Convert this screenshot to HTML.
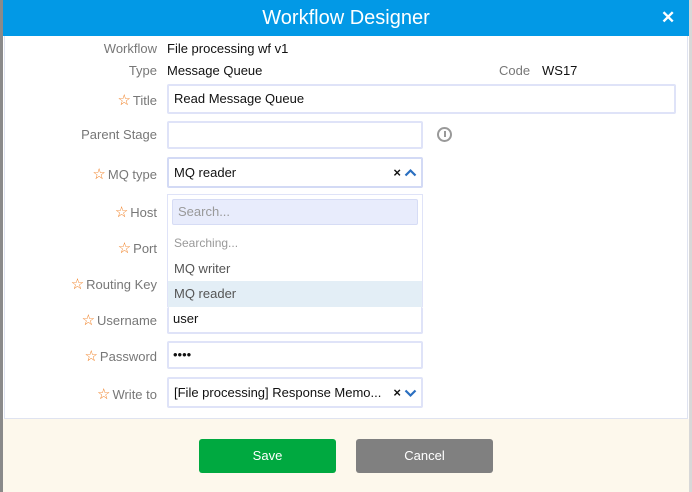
<!DOCTYPE html>
<html><head><style>
*{box-sizing:border-box;margin:0;padding:0}
body{width:692px;height:492px;background:#fff;font-family:"Liberation Sans",sans-serif;font-size:13px;position:relative;overflow:hidden;color:#111}
.lb{position:absolute;right:535px;color:#777;text-align:right;white-space:nowrap}
.st{color:#f07a1a;font-size:15px;margin-right:2px}
.v{position:absolute;white-space:nowrap}
.in{position:absolute;left:167px;width:256px;border:2px solid #dfe3f8;border-radius:2px;background:#fff;padding:0 5px;line-height:24px}
</style></head><body>
<div style="position:absolute;left:0;top:0;width:3px;height:492px;background:#8a8a8a"></div>
<div style="position:absolute;left:689px;top:0;width:3px;height:492px;background:#d8d8d8"></div>
<div style="position:absolute;left:3px;top:0;width:686px;height:36px;background:#0299e6;color:#fff;font-size:20px;text-align:center;line-height:36px">Workflow Designer</div>
<div style="position:absolute;left:661px;top:8px;color:#fff;font-size:17px;font-weight:bold">✕</div>
<div style="position:absolute;left:4px;top:36px;width:684px;height:383px;border:1px solid #dfe3f0;border-top:none"></div>
<div style="position:absolute;left:3px;top:419px;width:686px;height:73px;background:#fdf8ec"></div>

<div class="lb" style="top:41px">Workflow</div><div class="v" style="left:167px;top:41px">File processing wf v1</div>
<div class="lb" style="top:63px">Type</div><div class="v" style="left:167px;top:63px">Message Queue</div>
<div class="v" style="left:499px;top:63px;color:#777">Code</div><div class="v" style="left:542px;top:63px">WS17</div>

<div class="lb" style="top:91px"><span class="st">☆</span>Title</div>
<div class="in" style="top:84px;width:509px;height:30px;line-height:26px">Read Message Queue</div>
<div class="lb" style="top:127px">Parent Stage</div>
<div class="in" style="top:121px;height:28px"></div>
<div style="position:absolute;left:437px;top:127px;width:15px;height:15px;border:2px solid #999;border-radius:50%"><div style="position:absolute;left:4.5px;top:2px;width:2px;height:6px;background:#999"></div></div>
<div class="lb" style="top:165px"><span class="st">☆</span>MQ type</div>
<div class="in" style="top:157px;height:31px;border-color:#d3daf5;line-height:27px">MQ reader<span style="position:absolute;right:20px;font-weight:bold">×</span><svg style="position:absolute;right:4px;top:9px" width="13" height="9"><path d="M1.5 7.5L6.5 2.5L11.5 7.5" stroke="#2a6fc0" stroke-width="2.2" fill="none"/></svg></div>

<div style="position:absolute;left:167px;top:194px;width:256px;height:113px;border:1px solid #dfe3f8;background:#fff">
<div style="position:absolute;left:4px;top:4px;width:246px;height:26px;background:#e8ecfc;border:1px solid #d6dcf5;border-radius:2px;color:#999;line-height:24px;padding-left:5px">Search...</div>
<div style="position:absolute;left:6px;top:41px;color:#999;font-size:12px">Searching...</div>
<div style="position:absolute;left:6px;top:66px;color:#555">MQ writer</div>
<div style="position:absolute;left:0;top:86px;width:254px;height:26px;background:#e3eef6;color:#555;padding-left:6px;line-height:26px">MQ reader</div>
</div>
<div class="lb" style="top:203px"><span class="st">☆</span>Host</div>
<div class="lb" style="top:239px"><span class="st">☆</span>Port</div>
<div class="lb" style="top:275px"><span class="st">☆</span>Routing Key</div>
<div class="lb" style="top:311px"><span class="st">☆</span>Username</div>
<div class="in" style="top:307px;height:27px;border-top:none;padding-left:4px">user</div>
<div class="lb" style="top:347px"><span class="st">☆</span>Password</div>
<div class="in" style="top:341px;height:28px;padding-left:4px">••••</div>
<div class="lb" style="top:385px"><span class="st">☆</span>Write to</div>
<div class="in" style="top:377px;height:31px;line-height:27px">[File processing] Response Memo...<span style="position:absolute;right:20px;font-weight:bold">×</span><svg style="position:absolute;right:4px;top:10px" width="13" height="9"><path d="M1.5 1.5L6.5 6.5L11.5 1.5" stroke="#2a6fc0" stroke-width="2.2" fill="none"/></svg></div>

<div style="position:absolute;left:199px;top:439px;width:137px;height:34px;background:#00a940;border-radius:3px;color:#fff;text-align:center;line-height:34px">Save</div>
<div style="position:absolute;left:356px;top:439px;width:137px;height:34px;background:#808080;border-radius:3px;color:#fff;text-align:center;line-height:34px">Cancel</div>
</body></html>
